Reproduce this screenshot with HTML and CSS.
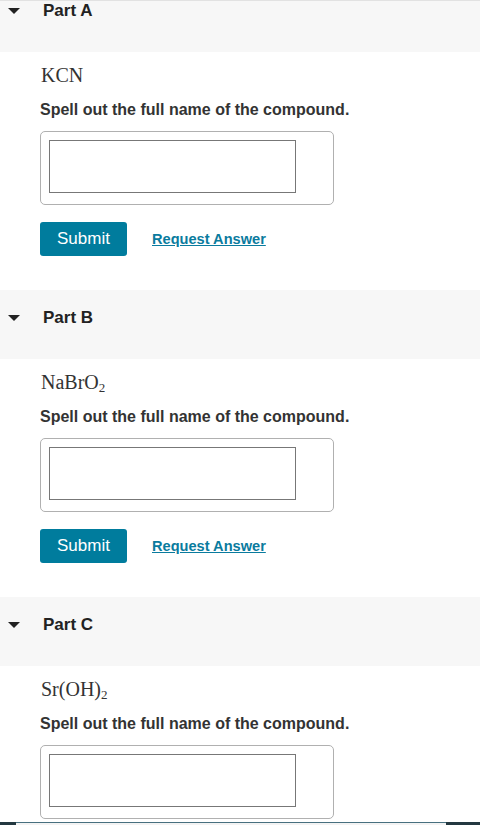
FILE: index.html
```html
<!DOCTYPE html>
<html lang="en">
<head>
    <meta charset="UTF-8">
    <meta name="viewport" content="width=device-width, initial-scale=1.0">
    <title>Naming Compounds</title>
    <link rel="stylesheet" href="styles.css">
</head>
<body>

<div class="page">
    <div class="parts">
        <section class="part">
            <div class="part-header">
                <span class="caret"></span>
                <h3>Part A</h3>
            </div>
            <div class="part-body">
                <div class="formula">KCN</div>
                <p class="prompt">Spell out the full name of the compound.</p>
                <div class="answer-box">
                    <input type="text" class="answer-input">
                </div>
                <div class="actions">
                    <button class="submit-button">Submit</button>
                    <a href="#" class="request-link">Request Answer</a>
                </div>
            </div>
        </section>

        <section class="part">
            <div class="part-header">
                <span class="caret"></span>
                <h3>Part B</h3>
            </div>
            <div class="part-body">
                <div class="formula">NaBrO<sub>2</sub></div>
                <p class="prompt">Spell out the full name of the compound.</p>
                <div class="answer-box">
                    <input type="text" class="answer-input">
                </div>
                <div class="actions">
                    <button class="submit-button">Submit</button>
                    <a href="#" class="request-link">Request Answer</a>
                </div>
            </div>
        </section>

        <section class="part">
            <div class="part-header">
                <span class="caret"></span>
                <h3>Part C</h3>
            </div>
            <div class="part-body">
                <div class="formula">Sr(OH)<sub>2</sub></div>
                <p class="prompt">Spell out the full name of the compound.</p>
                <div class="answer-box">
                    <input type="text" class="answer-input">
                </div>
            </div>
        </section>
    </div>
</div>

<div class="bottom-bar">
    <div class="bottom-bar-inner"></div>
</div>

</body>
</html>
```

FILE: styles.css
```css
body {
    font-family: "Liberation Sans", Arial, sans-serif;
    margin: 0;
    padding: 0;
    background-color: #ffffff;
    color: #222222;
}

.page {
    border-top: 1px solid #e2e2e2;
    overflow: hidden;
}

.parts {
    margin-top: -18px;
}

.part {
    padding-bottom: 34px;
}

.part-header {
    display: flex;
    align-items: center;
    height: 69px;
    box-sizing: border-box;
    padding: 18px 0 31px 8px;
    background-color: #f7f7f7;
}

.caret {
    width: 0;
    height: 0;
    border-left: 6px solid transparent;
    border-right: 6px solid transparent;
    border-top: 6px solid #222222;
    margin-right: 23px;
}

.part-header h3 {
    margin: 0;
    font-size: 17px;
    line-height: 20px;
    font-weight: bold;
    color: #222222;
}

.part-body {
    padding-left: 40px;
}

.formula {
    margin-top: 11px;
    font-family: "Liberation Serif", "Times New Roman", serif;
    font-size: 20px;
    line-height: 24px;
    height: 24px;
    padding-left: 1px;
    color: #333333;
}

.formula sub {
    font-size: 13px;
    line-height: 0;
    vertical-align: -3px;
}

.prompt {
    margin: 14px 0 0 0;
    font-size: 16px;
    line-height: 18px;
    font-weight: bold;
    color: #333333;
}

.answer-box {
    margin-top: 12px;
    width: 294px;
    height: 74px;
    box-sizing: border-box;
    padding: 8px;
    border: 1px solid #b0b0b0;
    border-radius: 5px;
}

.answer-input {
    display: block;
    width: 247px;
    height: 53px;
    box-sizing: border-box;
    margin: 0;
    border: 1px solid #777777;
    border-radius: 0;
    padding: 0 6px;
    font-size: 16px;
}

.actions {
    display: flex;
    align-items: center;
    margin-top: 17px;
    gap: 25px;
}

.submit-button {
    width: 87px;
    height: 34px;
    background-color: #007c9d;
    border: none;
    border-radius: 3px;
    color: #ffffff;
    font-family: "Liberation Sans", Arial, sans-serif;
    font-size: 17px;
    padding: 0;
    cursor: pointer;
}

.request-link {
    color: #0a7b9e;
    font-size: 14.6px;
    font-weight: bold;
    text-decoration: underline;
}

.bottom-bar {
    position: fixed;
    left: 0;
    right: 0;
    bottom: 0;
    height: 3px;
    background-color: #233840;
    padding: 0 34px 0 16px;
}

.bottom-bar-inner {
    height: 3px;
    box-sizing: border-box;
    border-top: 1px solid #47707f;
    background-color: #f3f3f3;
}
```
